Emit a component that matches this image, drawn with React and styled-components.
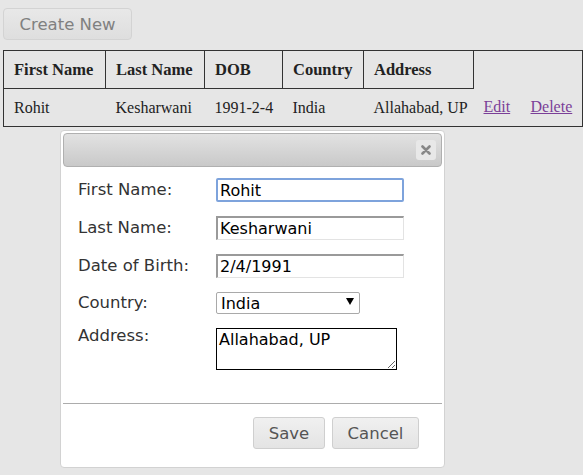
import React from "react";
import styled, { createGlobalStyle } from "styled-components";

const GlobalStyle = createGlobalStyle`
  html, body {
    margin: 0;
    background: #e6e6e6;
  }
  body {
    padding: 8px 0 0 3px;
    position: relative;
    min-height: 467px;
  }
`;

const CreateButton = styled.button`
  display: block;
  width: 129px;
  height: 32px;
  padding: 0;
  border: 1px solid #d3d3d3;
  border-radius: 4px;
  background: linear-gradient(#e8e8e8, #dedede);
  color: #808080;
  font: 16.5px "DejaVu Sans", Verdana, sans-serif;
`;

const Table = styled.table`
  margin-top: 10px;
  border-collapse: collapse;
  border: 1px solid #333;
  table-layout: fixed;
  width: 579px;
  font-family: "Liberation Serif", Georgia, serif;
  font-size: 16px;
  color: #222;
`;

const Th = styled.th`
  border: 1px solid #333;
  height: 37px;
  padding: 0 10px;
  text-align: left;
  font-size: 16.5px;
  white-space: nowrap;
`;

const Td = styled.td`
  height: 37px;
  padding: 0 10px;
  white-space: nowrap;
`;

const ActionLink = styled.a`
  color: #7b3f98;
  text-decoration: underline;
  cursor: pointer;
`;

const Dialog = styled.div`
  position: absolute;
  left: 60px;
  top: 130px;
  width: 385px;
  height: 338px;
  box-sizing: border-box;
  padding: 2px;
  background: #fff;
  border: 1px solid #d2d2d2;
  border-radius: 4px;
  display: flex;
  flex-direction: column;
  font-family: "DejaVu Sans", Verdana, sans-serif;
`;

const TitleBar = styled.div`
  height: 34px;
  box-sizing: border-box;
  border: 1px solid #b0b0b0;
  border-radius: 4px;
  background: linear-gradient(#e2e2e2, #c9c9c9);
  display: flex;
  align-items: center;
  justify-content: flex-end;
  padding-right: 5px;
`;

const CloseButton = styled.span`
  width: 20px;
  height: 20px;
  border-radius: 3px;
  background: #e8e8e8;
  display: flex;
  align-items: center;
  justify-content: center;
`;

const Body = styled.div`
  flex: 1;
  padding: 11px 0 0 15px;
  display: grid;
  grid-template-columns: 138px auto;
  grid-auto-rows: min-content;
  row-gap: 14px;
  color: #333;
  font-size: 16.5px;
`;

const Label = styled.label`
  align-self: ${(p) => (p.$top ? "start" : "center")};
  line-height: 18px;
  margin-top: ${(p) => (p.$top ? "-1px" : "0")};
`;

const TextInput = styled.input`
  width: 188px;
  height: 24px;
  box-sizing: border-box;
  padding: 1px 2px;
  font: 16px "DejaVu Sans", Verdana, sans-serif;
  color: #000;
  background: #fff;
  border: 1px solid;
  border-color: ${(p) =>
    p.$focused ? "#7ea3dc" : "#9a9a9a #e3e3e3 #e3e3e3 #9a9a9a"};
  border-width: ${(p) => (p.$focused ? "2px" : "2px 1px 1px 2px")};
  border-radius: ${(p) => (p.$focused ? "2px" : "0")};
  outline: none;
`;

const SelectWrap = styled.div`
  position: relative;
  width: 144px;
  height: 22px;
`;

const Select = styled.select`
  appearance: none;
  width: 100%;
  height: 100%;
  box-sizing: border-box;
  padding: 0 4px;
  border: 1px solid #a9a9a9;
  border-radius: 2px;
  background: #fff;
  color: #000;
  font: 16px "DejaVu Sans", Verdana, sans-serif;
`;

const Arrow = styled.span`
  position: absolute;
  right: 6px;
  top: 6px;
  width: 0;
  height: 0;
  border-left: 4px solid transparent;
  border-right: 4px solid transparent;
  border-top: 7px solid #000;
  pointer-events: none;
`;

const TextArea = styled.textarea`
  width: 181px;
  height: 42px;
  box-sizing: border-box;
  padding: 1px 2px;
  border: 1px solid #000;
  font: 16px "DejaVu Sans", Verdana, sans-serif;
  color: #000;
  background: #fff;
  resize: both;
`;

const Footer = styled.div`
  border-top: 1px solid #acacac;
  display: flex;
  justify-content: flex-end;
  gap: 7px;
  padding: 13px 23px 16px 0;
`;

const DialogButton = styled.button`
  width: ${(p) => p.$w}px;
  height: 32px;
  padding: 0;
  border: 1px solid #cfcfcf;
  border-radius: 3px;
  background: linear-gradient(#f0f0f0, #e4e4e4);
  color: #555;
  font: 16.5px "DejaVu Sans", Verdana, sans-serif;
`;

const columns = [102, 99, 78, 81, 110, 47, 62];
const headers = ["First Name", "Last Name", "DOB", "Country", "Address"];

export default function App() {
  return (
    <>
      <GlobalStyle />
      <CreateButton>Create New</CreateButton>
      <Table>
        <colgroup>
          {columns.map((w, i) => (
            <col key={i} style={{ width: w }} />
          ))}
        </colgroup>
        <thead>
          <tr>
            {headers.map((h) => (
              <Th key={h}>{h}</Th>
            ))}
          </tr>
        </thead>
        <tbody>
          <tr>
            <Td>Rohit</Td>
            <Td>Kesharwani</Td>
            <Td>1991-2-4</Td>
            <Td>India</Td>
            <Td>Allahabad, UP</Td>
            <Td>
              <ActionLink>Edit</ActionLink>
            </Td>
            <Td>
              <ActionLink>Delete</ActionLink>
            </Td>
          </tr>
        </tbody>
      </Table>

      <Dialog>
        <TitleBar>
          <CloseButton>
            <svg width="10" height="10" viewBox="0 0 10 10">
              <path
                d="M1.5 1.5 L8.5 8.5 M8.5 1.5 L1.5 8.5"
                stroke="#888"
                strokeWidth="2.6"
                strokeLinecap="round"
              />
            </svg>
          </CloseButton>
        </TitleBar>
        <Body>
          <Label>First Name:</Label>
          <TextInput $focused defaultValue="Rohit" />
          <Label>Last Name:</Label>
          <TextInput defaultValue="Kesharwani" />
          <Label>Date of Birth:</Label>
          <TextInput defaultValue="2/4/1991" />
          <Label>Country:</Label>
          <SelectWrap>
            <Select defaultValue="India">
              <option>India</option>
            </Select>
            <Arrow />
          </SelectWrap>
          <Label $top>Address:</Label>
          <TextArea defaultValue="Allahabad, UP" />
        </Body>
        <Footer>
          <DialogButton $w={72}>Save</DialogButton>
          <DialogButton $w={87}>Cancel</DialogButton>
        </Footer>
      </Dialog>
    </>
  );
}
